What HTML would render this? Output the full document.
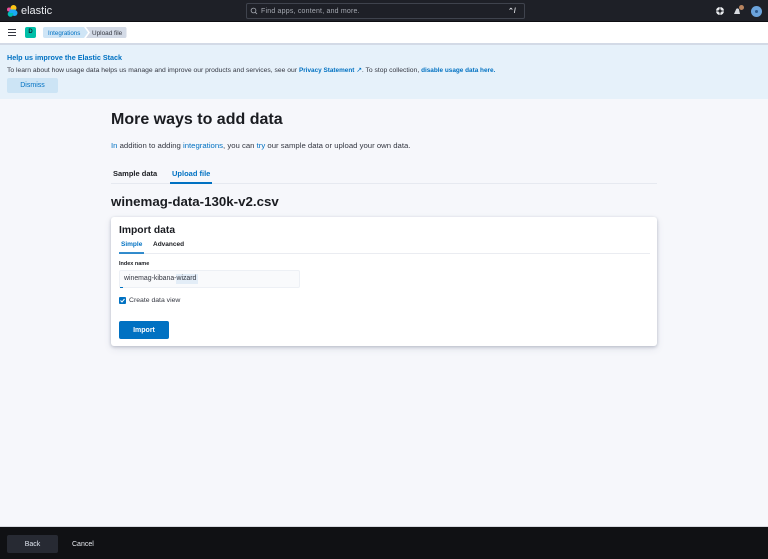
<!DOCTYPE html>
<html><head><meta charset="utf-8"><style>
html,body{margin:0;padding:0}
body{width:768px;height:559px;overflow:hidden;position:relative;background:#f6f7fb;font-family:"Liberation Sans",sans-serif;color:#343741}
#w{position:absolute;left:0;top:0;width:768px;height:559px;filter:blur(.25px)}
.a{position:absolute;white-space:nowrap}
.l{color:#0071c2}
</style></head><body><div id="w">
<div class="a" style="left:0;top:0;width:768px;height:22px;background:#1e2027;border-bottom:1px solid #0d0e12;box-sizing:border-box"></div>
<svg class="a" style="left:7px;top:5px" width="11" height="12" viewBox="0 0 11 12"><circle cx="6.500" cy="3" r="3" fill="#fec514"/><circle cx="2" cy="4.500" r="2" fill="#f04e98"/><circle cx="7.500" cy="8" r="3" fill="#1ba9f5"/><circle cx="3.500" cy="9" r="2.800" fill="#00bfb3"/><rect x="2.500" y="4.500" width="6" height="3.500" fill="#1ba9f5"/></svg>
<div class="a" style="left:21px;top:4px;font-size:11px;line-height:15px;color:#e8eaee">elastic</div>
<div class="a" style="left:246px;top:3px;width:279px;height:16px;background:#1e2027;border:1px solid #3f434d;border-radius:2px;box-sizing:border-box"></div>
<svg class="a" style="left:250px;top:7px" width="8" height="8" viewBox="0 0 8 8" fill="none" stroke="#a9adb5" stroke-width=".8"><circle cx="3.500" cy="3.500" r="2.400"/><path d="M5.300 5.300L7 7"/></svg>
<div class="a" style="left:261px;top:5px;font-size:7px;line-height:13px;color:#a5a9b1;letter-spacing:.2px">Find apps, content, and more.</div>
<div class="a" style="left:508px;top:6px;font-size:7px;line-height:12px;color:#e0e2e6;font-weight:bold">⌃/</div>
<svg class="a" style="left:716px;top:7px" width="8" height="8" viewBox="0 0 8 8"><circle cx="4" cy="4" r="4" fill="#eceef1"/><circle cx="4" cy="4" r="1.600" fill="#1e2027"/><path d="M4 0V8M0 4H8" stroke="#1e2027" stroke-width=".7"/></svg>
<svg class="a" style="left:733px;top:6px" width="10" height="10" viewBox="0 0 10 10"><path d="M1 8L3 3.500C3.500 2 5.500 2 6 3.500L7 8Z" fill="#d8dbe0"/></svg>
<div class="a" style="left:739px;top:5px;width:5px;height:5px;border-radius:50%;background:#b8845f"></div>
<div class="a" style="left:751px;top:6px;width:11px;height:11px;border-radius:50%;background:#6ba3dc"></div>
<div class="a" style="left:755px;top:10px;width:3px;height:3px;border-radius:50%;background:#2c5a8f"></div>

<div class="a" style="left:0;top:22px;width:768px;height:21px;background:#fff"></div>
<div class="a" style="left:8px;top:29px;width:8px;height:7px;border-top:1px solid #343741;border-bottom:1px solid #343741;box-sizing:border-box"></div>
<div class="a" style="left:8px;top:32px;width:8px;height:1px;background:#343741"></div>
<div class="a" style="left:25px;top:27px;width:11px;height:11px;border-radius:2px;background:#00bfa8;font-size:6px;line-height:11px;text-align:center;color:#123;font-weight:bold">D</div>
<svg class="a" style="left:43px;top:27px" width="84" height="11" viewBox="0 0 84 11"><path d="M2 0H41L45 5.500L41 11H2Q0 11 0 9V2Q0 0 2 0Z" fill="#cfe5f6"/><path d="M43 0H82Q83.500 0 83.500 2V9Q83.500 11 82 11H43L47 5.500Z" fill="#d3dae6"/></svg>
<div class="a l" style="left:48px;top:28px;font-size:6.200px;line-height:11px">Integrations</div>
<div class="a" style="left:92px;top:28px;font-size:6.400px;line-height:11px">Upload file</div>

<div class="a" style="left:0;top:43px;width:768px;height:2px;background:#d3dae6"></div>
<div class="a" style="left:0;top:45px;width:768px;height:54px;background:#e6f1fa"></div>
<div class="a" style="left:7px;top:52px;font-size:7.200px;line-height:11px;color:#0071c2;font-weight:bold">Help us improve the Elastic Stack</div>
<div class="a" style="left:7px;top:65px;font-size:6.750px;line-height:11px">To learn about how usage data helps us manage and improve our products and services, see our <span class="l" style="font-weight:bold;font-size:6.400px">Privacy Statement</span> <span class="l">↗</span>. To stop collection, <span class="l" style="font-weight:bold;font-size:6.400px">disable usage data here.</span></div>
<div class="a" style="left:7px;top:78px;width:51px;height:15px;background:#cce4f5;border-radius:2px;font-size:7px;line-height:16px;text-align:center;color:#0071c2">Dismiss</div>

<div class="a" style="left:111px;top:110px;font-size:16px;line-height:20px;font-weight:bold;color:#1a1c21">More ways to add data</div>
<div class="a" style="left:111px;top:140px;font-size:7.750px;line-height:11px"><span class="l">In</span> addition to adding <span class="l">integrations</span>, you can <span class="l">try</span> our sample data or upload your own data.</div>
<div class="a" style="left:113px;top:168px;font-size:7.500px;line-height:11px;font-weight:bold;color:#1a1c21">Sample data</div>
<div class="a" style="left:172px;top:168px;font-size:7.500px;line-height:11px;font-weight:bold;color:#0071c2">Upload file</div>
<div class="a" style="left:111px;top:183px;width:546px;height:1px;background:#e6e9f0"></div>
<div class="a" style="left:170px;top:182px;width:42px;height:2px;background:#0071c2"></div>
<div class="a" style="left:111px;top:193px;font-size:13.300px;line-height:18px;font-weight:bold;color:#1a1c21">winemag-data-130k-v2.csv</div>

<div class="a" style="left:111px;top:217px;width:546px;height:129px;background:#fff;border-radius:3px;box-shadow:0 1px 3px rgba(60,70,100,.3),0 3px 8px rgba(60,70,100,.1)"></div>
<div class="a" style="left:119px;top:224px;font-size:10.300px;line-height:14px;font-weight:bold;color:#1a1c21">Import data</div>
<div class="a" style="left:121px;top:240px;font-size:6.500px;line-height:10px;font-weight:bold;color:#0071c2">Simple</div>
<div class="a" style="left:153px;top:240px;font-size:6.500px;line-height:10px;font-weight:bold;color:#1a1c21">Advanced</div>
<div class="a" style="left:119px;top:253px;width:531px;height:1px;background:#eaecf1"></div>
<div class="a" style="left:119px;top:252px;width:25px;height:2px;background:#0071c2;opacity:.8"></div>
<div class="a" style="left:119px;top:260px;font-size:5.500px;line-height:8px;font-weight:bold;color:#1a1c21">Index name</div>
<div class="a" style="left:119px;top:270px;width:181px;height:18px;background:#f9fafc;border:1px solid #edf0f5;border-radius:2px;box-sizing:border-box"></div>
<div class="a" style="left:176px;top:274px;width:22px;height:10px;background:#e3edf7"></div>
<div class="a" style="left:124px;top:274px;font-size:6.900px;line-height:10px">winemag-kibana-wizard</div>
<div class="a" style="left:120px;top:287px;width:3px;height:1px;background:#0071c2"></div>
<div class="a" style="left:119px;top:297px;width:7px;height:7px;background:#0071c2;border-radius:1px"></div>
<svg class="a" style="left:119px;top:297px" width="7" height="7" viewBox="0 0 7 7" fill="none" stroke="#fff"><path d="M1.500 3.500L3 5L5.500 2"/></svg>
<div class="a" style="left:129px;top:296px;font-size:6.850px;line-height:10px">Create data view</div>
<div class="a" style="left:119px;top:321px;width:50px;height:18px;background:#0071c2;border-radius:2px;font-size:7px;line-height:19px;text-align:center;color:#fff;font-weight:bold">Import</div>

<div class="a" style="left:0;top:526px;width:768px;height:1px;background:#d8dae0"></div>
<div class="a" style="left:0;top:527px;width:768px;height:32px;background:#101114"></div>
<div class="a" style="left:7px;top:535px;width:51px;height:18px;background:#272a33;border-radius:2px;font-size:7px;line-height:19px;text-align:center;color:#dfe5ef">Back</div>
<div class="a" style="left:72px;top:535px;font-size:7px;line-height:19px;color:#e8ebf0">Cancel</div>
</div></body></html>
